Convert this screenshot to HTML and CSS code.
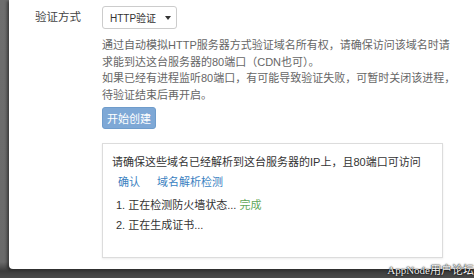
FILE: index.html
```html
<!DOCTYPE html>
<html>
  <head>
    <title>SSL 证书</title>
    <link rel="stylesheet" href="styles.css">
  </head>
  <body>
    <div class="page">
      <div class="dialog">
        <div class="form-row">
          <div class="form-label">验证方式</div>
          <div class="form-field">
            <div class="select">HTTP验证 <span class="caret"></span></div>
            <div class="help">
              通过自动模拟HTTP服务器方式验证域名所有权，请确保访问该域名时请<br>
              求能到达这台服务器的80端口（CDN也可）。<br>
              如果已经有进程监听80端口，有可能导致验证失败，可暂时关闭该进程，<br>
              待验证结束后再开启。
            </div>
            <button class="btn-primary">开始创建</button>
            <div class="panel">
              <div class="panel-title">请确保这些域名已经解析到这台服务器的IP上，且80端口可访问</div>
              <div class="panel-links">
                <a href="#">确认</a>
                <a href="#">域名解析检测</a>
              </div>
              <ol class="steps">
                <li>1. 正在检测防火墙状态... <span class="done">完成</span></li>
                <li>2. 正在生成证书...</li>
              </ol>
            </div>
          </div>
        </div>
      </div>
      <div class="watermark">AppNode用户论坛</div>
    </div>
  </body>
</html>
```

FILE: styles.css
```css
body {
  margin: 0;
  font-family: "Liberation Sans", "Noto Sans CJK SC", sans-serif;
  font-size: 11px;
  background: #3f3f3f;
}

.page {
  position: relative;
  width: 474px;
  height: 278px;
  overflow: hidden;
  background: linear-gradient(to bottom, #6e6e6e 0, #6a6a6a 262px, #3c3c3c 271px, #4a4a4a 278px);
}

.dialog {
  box-sizing: border-box;
  margin-left: 9px;
  height: 269px;
  padding-top: 6px;
  background: #fff;
  border-bottom-left-radius: 4px;
  box-shadow: -2px 1px 3px rgba(0, 0, 0, 0.45);
}

.form-row {
  display: flex;
}

.form-label {
  width: 67px;
  padding-left: 26px;
  line-height: 23px;
  font-size: 11.5px;
  color: #444;
}

.form-field {
  display: flex;
  flex-direction: column;
  align-items: flex-start;
}

.select {
  box-sizing: border-box;
  display: flex;
  align-items: center;
  width: 75px;
  height: 23px;
  padding-left: 7px;
  border: 1px solid #ccc;
  border-radius: 3px;
  font-size: 10px;
  color: #333;
  white-space: nowrap;
}

.caret {
  margin-left: 9px;
  border-top: 4px solid #333;
  border-left: 3.5px solid transparent;
  border-right: 3.5px solid transparent;
}

.help {
  margin-top: 8px;
  line-height: 16.5px;
  color: #666;
  white-space: nowrap;
}

.btn-primary {
  margin-top: 4px;
  width: 54px;
  height: 22px;
  padding: 0;
  border: 1px solid #6f9ccb;
  border-radius: 3px;
  background: #7ea8d6;
  color: #fff;
  font-family: inherit;
  font-size: 11px;
}

.panel {
  box-sizing: border-box;
  margin-top: 14px;
  width: 341px;
  min-height: 107px;
  padding: 9px 9px 22px;
  border: 1px solid #dcdcdc;
  box-shadow: 0 1px 2px rgba(0, 0, 0, 0.08);
  color: #333;
}

.panel-title {
  line-height: 18px;
}

.panel-links {
  display: flex;
  gap: 17px;
  padding-left: 6px;
  margin-top: 2px;
  line-height: 18px;
}

.panel-links a {
  color: #3a7fc1;
  text-decoration: none;
}

.steps {
  list-style: none;
  margin: 4px 0 0;
  padding-left: 4px;
}

.steps li {
  line-height: 20px;
}

.done {
  color: #5fa75a;
}

.watermark {
  position: absolute;
  right: 0;
  bottom: 1px;
  font-family: "Liberation Serif", "Noto Sans CJK SC", serif;
  font-size: 11px;
  color: #f2f2f2;
  text-shadow: 0 0 2px #000, 0 0 1px #000;
}
```
